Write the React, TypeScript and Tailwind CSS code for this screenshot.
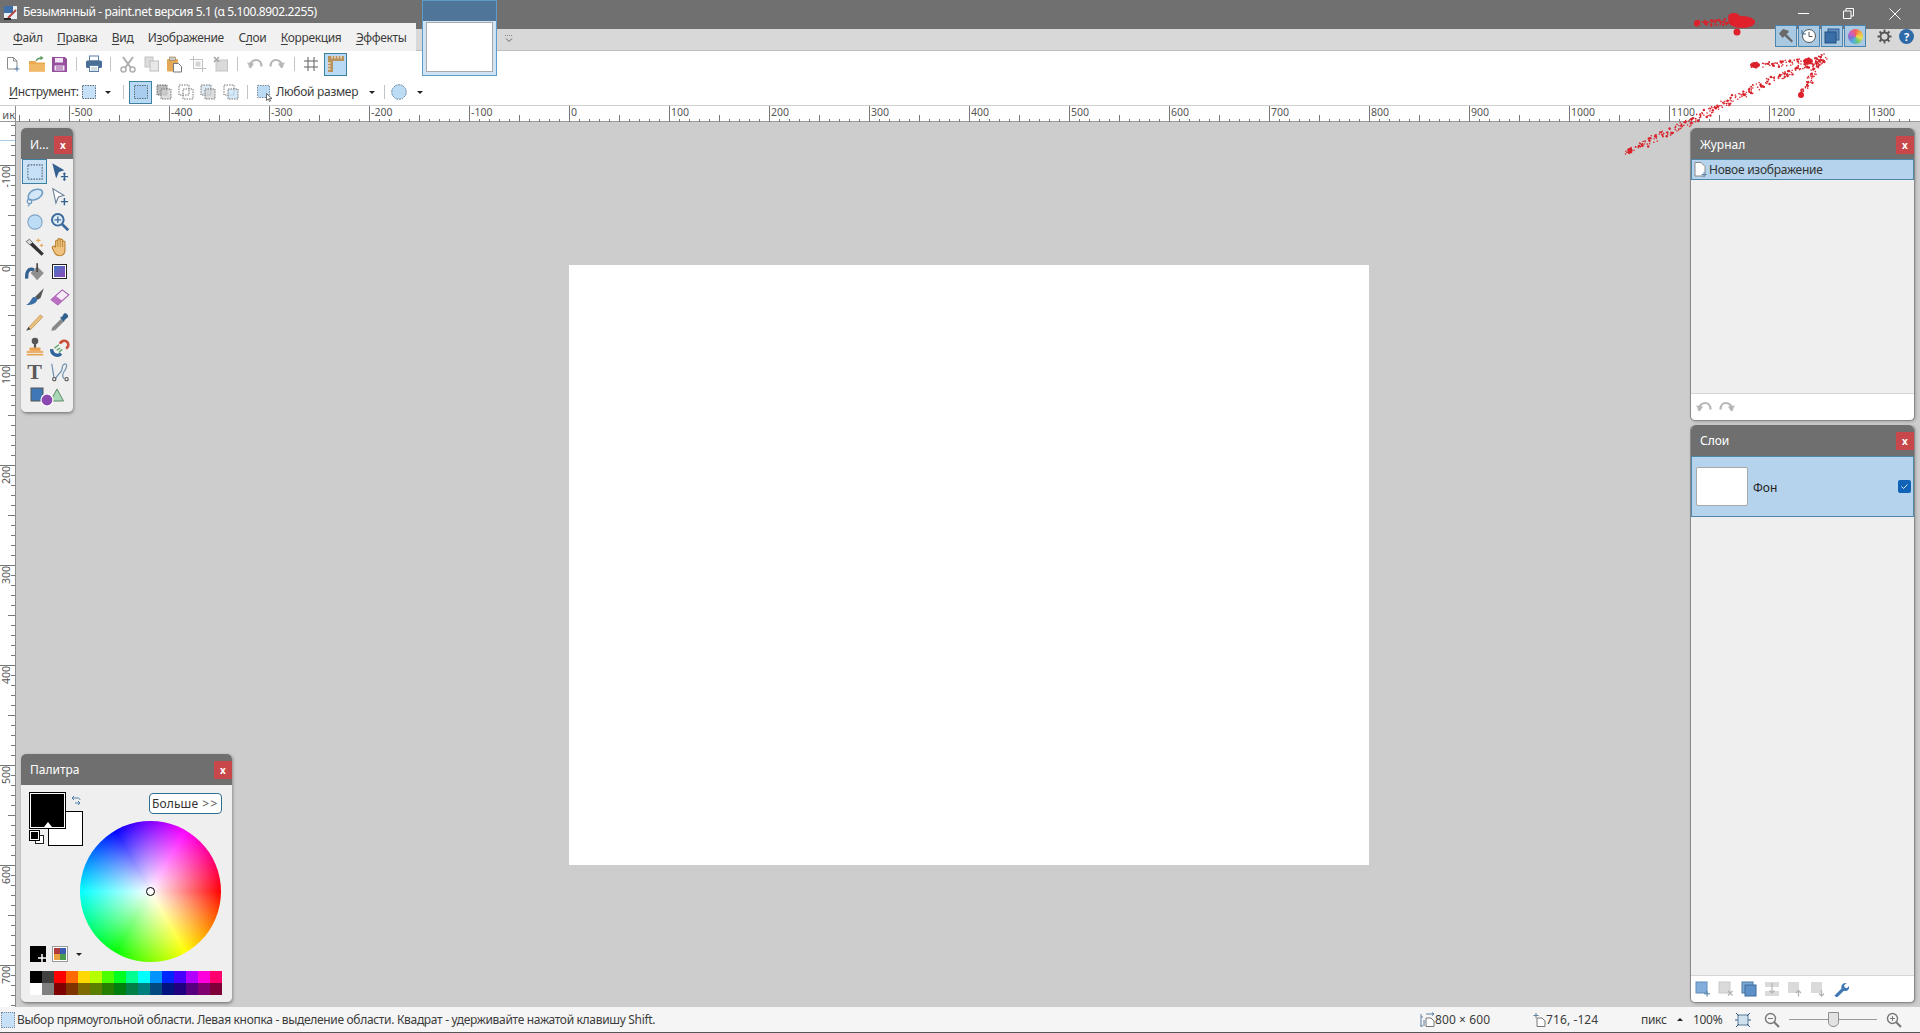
import type { ReactNode } from 'react'

function Ico({ w = 20, h = 20, children }: { w?: number; h?: number; children: ReactNode }) {
  return (
    <svg width={w} height={h} viewBox={`0 0 ${w} ${h}`} fill="none" className="shrink-0">
      {children}
    </svg>
  )
}

const menus: [string, string, string][] = [
  ['', 'Ф', 'айл'],
  ['', 'П', 'равка'],
  ['', 'В', 'ид'],
  ['И', 'з', 'ображение'],
  ['С', 'л', 'ои'],
  ['', 'К', 'оррекция'],
  ['', 'Э', 'ффекты'],
]

const paletteTop = ['#000000', '#404040', '#ff0000', '#ff6a00', '#ffd800', '#b6ff00', '#4cff00', '#00ff21', '#00ff90', '#00ffff', '#0094ff', '#0026ff', '#4800ff', '#b200ff', '#ff00dc', '#ff006e']
const paletteBottom = ['#ffffff', '#808080', '#7f0000', '#7f3300', '#7f6a00', '#5b7f00', '#267f00', '#007f0e', '#007f46', '#007f7f', '#004a7f', '#00137f', '#21007f', '#57007f', '#7f006e', '#7f0037']

function Caret() {
  return <div className="h-0 w-0 border-x-[3px] border-t-[3px] border-x-transparent border-t-[#222]" />
}

function Sep() {
  return (
    <div className="flex w-[11px] justify-center">
      <div className="h-[14px] w-px bg-[#c4c4c4]" />
    </div>
  )
}

function Btn({ children, active }: { children: ReactNode; active?: boolean }) {
  return (
    <div className={active ? 'flex h-[23px] w-[23px] items-center justify-center border border-[#3f7f9f] bg-[#b9daf5]' : 'flex h-[23px] w-[23px] items-center justify-center'}>
      {children}
    </div>
  )
}

/* ---- main toolbar icons ---- */
const NewIcon = () => (
  <Ico w={16} h={16}>
    <path d="M2.5 1.5h6l3.5 3.5v8h-9.500z" fill="#fff" stroke="#8a8a8a" />
    <path d="M8.500 1.500v3.500h3.500" stroke="#8a8a8a" />
    <path d="M12 10.500v5M9.500 13h5" stroke="#5a87b5" />
  </Ico>
)
const OpenIcon = () => (
  <Ico w={18} h={18}>
    <path d="M1 6h6l1.500 1.500h8.500v9h-16z" fill="#e8a84f" />
    <path d="M1 9h16v7.500h-16z" fill="#f0b765" />
    <path d="M8 6c1-2 3-3 6-3M12.500 1.500l2 1.500-2 1.500" stroke="#5c9a62" strokeWidth="1.300" />
  </Ico>
)
const SaveIcon = () => (
  <Ico w={17} h={17}>
    <path d="M1 1h13l2 2v13h-15z" fill="#96509f" />
    <rect x="4" y="2" width="8" height="4.500" fill="#f2e7f4" />
    <rect x="3.500" y="9.500" width="10" height="5" fill="#f2e7f4" />
    <path d="M5 11h7M5 13h7" stroke="#96509f" />
  </Ico>
)
const PrintIcon = () => (
  <Ico w={18} h={18}>
    <rect x="4.500" y="1" width="9" height="5" fill="#fff" stroke="#5a7fa6" />
    <rect x="1" y="5.500" width="16" height="7.500" rx="1.500" fill="#4a6f96" />
    <rect x="4.500" y="10.500" width="9" height="6" fill="#fff" stroke="#5a7fa6" />
    <path d="M6 13h6M6 15h6" stroke="#a9b9c9" />
  </Ico>
)
const CutIcon = () => (
  <Ico w={16} h={17}>
    <path d="M3 1l8 11M13 1l-8 11" stroke="#aeaeae" strokeWidth="2" />
    <circle cx="3.500" cy="13.500" r="2.500" stroke="#aeaeae" strokeWidth="1.500" />
    <circle cx="12.500" cy="13.500" r="2.500" stroke="#aeaeae" strokeWidth="1.500" />
  </Ico>
)
const CopyIcon = () => (
  <Ico w={16} h={16}>
    <rect x="1" y="1" width="8" height="10" fill="#dcdcdc" stroke="#c4c4c4" />
    <rect x="6" y="5" width="8.500" height="10" fill="#e8e8e8" stroke="#bdbdbd" />
  </Ico>
)
const PasteIcon = () => (
  <Ico w={17} h={17}>
    <rect x="1" y="3" width="11" height="12.500" rx="1" fill="#e3a957" />
    <rect x="3.500" y="1" width="6" height="3.500" fill="#c9c9c9" stroke="#9a7a4a" strokeWidth=".6" />
    <path d="M7.500 7.500h5l3 3v5.500h-8z" fill="#fff" stroke="#777" />
  </Ico>
)
const CropIcon = () => (
  <Ico w={16} h={16}>
    <path d="M3.500 0v12.500h12.500M0 3.500h12.500v12.500" stroke="#c0c0c0" />
    <rect x="5.500" y="5.500" width="5" height="5" fill="#d4d4d4" />
  </Ico>
)
const DeselectIcon = () => (
  <Ico w={16} h={16}>
    <rect x="3" y="4" width="11.500" height="11" fill="#dadada" stroke="#c4c4c4" />
    <path d="M1 1l5 5M6 1l-5 5" stroke="#a6a6a6" strokeWidth="1.600" />
  </Ico>
)
const UndoIcon = ({ color = '#b6b6b6' }: { color?: string }) => (
  <Ico w={17} h={14}>
    <path d="M4 10.500a6.200 6.200 0 0 1 6-7.500c3.500 0 5.500 3 5.500 6.500" stroke={color} strokeWidth="2.200" />
    <path d="M1 5.500l3.800 6 3.200-5z" fill={color} />
  </Ico>
)
const RedoIcon = ({ color = '#b6b6b6' }: { color?: string }) => (
  <svg width="17" height="14" viewBox="0 0 17 14" fill="none" className="shrink-0 -scale-x-100">
    <path d="M4 10.500a6.200 6.200 0 0 1 6-7.500c3.500 0 5.500 3 5.500 6.500" stroke={color} strokeWidth="2.200" />
    <path d="M1 5.500l3.800 6 3.200-5z" fill={color} />
  </svg>
)
const GridIcon = () => (
  <Ico w={16} h={16}>
    <path d="M5 1v14M11 1v14M1 5h14M1 11h14" stroke="#5f5f5f" />
  </Ico>
)
const RulerIcon = () => (
  <Ico w={18} h={18}>
    <path d="M1 1h16v5h-11v11h-5z" fill="#b8935c" />
    <path d="M5 1v2.500M8 1v2.500M11 1v2.500M14 1v2.500M1 8h2.500M1 11h2.500M1 14h2.500" stroke="#fff" />
  </Ico>
)

const SelectRect = ({ dark }: { dark?: boolean }) => (
  <Ico w={16} h={16}>
    <rect x="1.500" y="1.500" width="13" height="13" fill={dark ? '#a8cdee' : '#c5e0f7'} stroke="#596a7a" strokeDasharray="1.500 1" />
  </Ico>
)
const ComboRect = ({ mode }: { mode: number }) => (
  <Ico w={16} h={16}>
    {mode === 1 && <rect x="1" y="1" width="10" height="10" fill="#bcbcbc" stroke="#666" strokeDasharray="1.500 1" />}
    {mode !== 1 && <rect x="1" y="1" width="10" height="10" fill={mode === 3 ? '#dbe9f5' : 'none'} stroke="#777" strokeDasharray="1.500 1" />}
    <rect x="5" y="5" width="10" height="10" fill={mode === 2 ? 'none' : mode === 4 ? '#c5e0f7' : '#d0d0d0'} fillOpacity=".7" stroke="#777" strokeDasharray="1.500 1" />
  </Ico>
)

/* ---- tools window icons ---- */
const toolIcons: ReactNode[] = [
  <SelectRect key="rect" />,
  <Ico key="move" w={18} h={18}>
    <path d="M2 1l11 6.500-5 1.500-2.500 6z" fill="#33618f" />
    <path d="M13 10v6.500M9.800 13.200h6.500" stroke="#33618f" strokeWidth="1.300" />
    <path d="M12 11l1-1 1 1M12 15.500l1 1 1-1" stroke="#33618f" />
  </Ico>,
  <Ico key="lasso" w={18} h={18}>
    <path d="M4 11.500c-3-3 .5-9 7-9.500 5-.3 6 3 3.500 6-2.500 3-7 4.500-10.500 3.500z" fill="#d3e7f8" stroke="#6f9dc4" strokeWidth="1.400" />
    <circle cx="4" cy="13" r="2" stroke="#6f9dc4" strokeWidth="1.200" />
    <path d="M4 15c0 1-.5 2-1.500 2.500" stroke="#6f9dc4" />
  </Ico>,
  <Ico key="movesel" w={18} h={18}>
    <path d="M2.500 1.500l10 6-5 1.500-2.200 5.500z" fill="#fff" stroke="#6d8299" />
    <path d="M13 10v6.500M9.800 13.200h6.500" stroke="#33618f" strokeWidth="1.300" />
  </Ico>,
  <Ico key="ellipse" w={16} h={16}>
    <circle cx="8" cy="8" r="6.500" fill="#bddcf5" stroke="#7fa5c6" />
  </Ico>,
  <Ico key="zoom" w={18} h={18}>
    <circle cx="7" cy="7" r="5.300" fill="#e4eff8" stroke="#3d6a9c" strokeWidth="1.800" />
    <path d="M7 4v6M4 7h6" stroke="#3d6a9c" strokeWidth="1.200" />
    <path d="M11 11l5.500 5.500" stroke="#3d6a9c" strokeWidth="2.400" />
  </Ico>,
  <Ico key="wand" w={18} h={18}>
    <path d="M1 4l3-2 13 13-2 2z" fill="#333" />
    <path d="M1 4l3-2 3 3-3 2z" fill="#ddd" stroke="#555" strokeWidth=".6" />
    <path d="M12 1v4M10 3h4M15 6v3M13.500 7.500h3" stroke="#e6ad63" />
  </Ico>,
  <Ico key="hand" w={16} h={18}>
    <path d="M4 9V4c0-1.500 2-1.500 2 0V2.500c0-1.500 2.200-1.500 2.200 0V3c0-1.500 2.200-1.500 2.200 0v1.500c0-1.300 2.100-1.300 2.100 0V11c0 4-2 6-5 6-2.500 0-3.500-1-4.500-3l-2-4c-.5-1.500 1.500-2.500 2.500-1z" fill="#efc37f" stroke="#b98332" />
    <path d="M6 4v5M8.200 3v6M10.400 4v5" stroke="#b98332" strokeWidth=".8" />
  </Ico>,
  <Ico key="fill" w={18} h={18}>
    <path d="M5 10l6-6 6 6-6 6.500z" fill="#8f8f8f" />
    <path d="M11 1v8" stroke="#444" strokeWidth="1.500" />
    <path d="M8 7C3 5 1 9 1.500 15" stroke="#33618f" strokeWidth="3" />
  </Ico>,
  <div key="gradient" className="h-[15px] w-[15px] border border-[#222] bg-white p-[1px]">
    <div className="h-full w-full bg-gradient-to-br from-[#3574c4] to-[#8a48b8]" />
  </div>,
  <Ico key="brush" w={18} h={18}>
    <path d="M9 9l8-8-3 9-2.500 1.500z" fill="#555" />
    <path d="M1 16c3 .5 5.500 0 8-1.500 2-1.200 2.500-3 1.500-4.500-1.500-1.500-3.500-1-4.500.5-1.200 2-2.500 4.500-5 5.500z" fill="#3b6ea5" />
  </Ico>,
  <Ico key="eraser" w={18} h={16}>
    <path d="M1 10.500l10-9 6 4.500-10 9z" fill="#f6eaf6" stroke="#a55bb0" />
    <path d="M1 10.500l4-3.700 6 4.500-4 3.700z" fill="#bb6fc2" />
  </Ico>,
  <Ico key="pencil" w={18} h={18}>
    <path d="M3 14L14 2.500l2 2L5 16z" fill="#eac07f" stroke="#b88a45" strokeWidth=".6" />
    <path d="M1 17l2-3.500 2 2z" fill="#444" />
  </Ico>,
  <Ico key="dropper" w={18} h={18}>
    <path d="M1 17l1-3L10 6l2.500 2.500-8 8z" fill="#888" />
    <path d="M9 5l2-1 1.500-2.500c2-1.500 5 1.500 3.500 3.500L13.500 7l-1 2z" fill="#33618f" />
  </Ico>,
  <Ico key="stamp" w={18} h={18}>
    <circle cx="9" cy="3.500" r="3" fill="#555" />
    <path d="M8 6h2v4h-2z" fill="#555" />
    <path d="M4 9.500h10v3h-10z" fill="#e8a04d" />
    <path d="M1.500 12.500h15v2h-15z" fill="#eab06c" />
    <path d="M1.500 16h15" stroke="#e8a04d" strokeWidth="1.400" />
  </Ico>,
  <Ico key="recolor" w={18} h={18}>
    <path d="M9 6a4 4 0 0 1 7-1 4 4 0 0 1-1.500 5.500" stroke="#c9513d" strokeWidth="2.400" />
    <path d="M1.500 11a5 5 0 0 0 8.500 4" stroke="#2f639b" strokeWidth="3" />
    <path d="M4 10l4-3M6 12l3-2M8 14l3-3" stroke="#5ca56a" strokeWidth="1.200" />
  </Ico>,
  <span key="text" className="font-['Liberation_Serif',serif] text-[22px] leading-none font-bold text-[#5a5a5a]">T</span>,
  <Ico key="line" w={18} h={18}>
    <path d="M1.500 1.500l2 12.500" stroke="#6d8fae" strokeWidth="1.100" />
    <path d="M5 15c1-3 6-6 6-9.500 0-3 2-4.500 3.500-3.500 1.500 1-.5 5-2 7-1.500 2-1.500 5 .5 6" stroke="#6d8fae" strokeWidth="1.100" />
    <circle cx="3.800" cy="15.500" r="1.500" stroke="#555" />
    <circle cx="15" cy="15.500" r="1.500" stroke="#555" />
  </Ico>,
]

const ShapesIcon = () => (
  <Ico w={34} h={20}>
    <rect x="1" y="1" width="12" height="13" fill="#3f78b5" stroke="#555" />
    <path d="M27 2l6.500 12h-13z" fill="#a9d6b4" stroke="#5c8a68" />
    <circle cx="17" cy="13" r="6" fill="#8a48b0" stroke="#fff" strokeWidth="1.200" />
  </Ico>
)

/* ---- layers footer ---- */
const layerIcons: ReactNode[] = [
  <Ico key="add" w={16} h={16}>
    <rect x="1" y="1" width="11" height="11" fill="#82aedb" stroke="#5e8bb8" />
    <path d="M12 10v5.500M9 12.800h6" stroke="#4f7ea9" />
  </Ico>,
  <Ico key="del" w={16} h={16}>
    <rect x="1" y="1" width="11" height="11" fill="#dadada" stroke="#c8c8c8" />
    <path d="M10 10l4.500 4.500M14.500 10l-4.500 4.500" stroke="#b3b3b3" strokeWidth="1.400" />
  </Ico>,
  <Ico key="dup" w={16} h={16}>
    <rect x="1" y="1" width="11" height="11" fill="#7ba9d6" stroke="#4a78a6" />
    <rect x="4" y="4" width="11" height="11" fill="#5f91c9" stroke="#3e6c9e" />
  </Ico>,
  <Ico key="merge" w={16} h={16}>
    <rect x="1" y="1" width="14" height="5" fill="#dadada" />
    <rect x="1" y="10" width="14" height="5" fill="#dadada" />
    <path d="M8 2v10M5.500 9.500l2.500 2.500 2.500-2.500" stroke="#b5b5b5" strokeWidth="1.200" />
  </Ico>,
  <Ico key="up" w={16} h={16}>
    <rect x="1" y="1" width="11" height="11" fill="#dadada" />
    <path d="M11.500 15.500v-6M9 12l2.500-2.500 2.500 2.500" stroke="#b5b5b5" strokeWidth="1.300" />
  </Ico>,
  <Ico key="down" w={16} h={16}>
    <rect x="1" y="1" width="11" height="11" fill="#dadada" />
    <path d="M11.500 9v6M9 12.500l2.500 2.500 2.500-2.500" stroke="#b5b5b5" strokeWidth="1.300" />
  </Ico>,
  <Ico key="props" w={16} h={16}>
    <path d="M1.500 14.500l7-7c-1-3 1.500-6 5-5.500l-2.500 2.500.8 2 2 .8 2.500-2.500c.5 3.500-2.500 6-5.500 5l-7 7z" fill="#3f78b5" />
  </Ico>,
]

function HorizontalRuler() {
  const ticks: number[] = []
  for (let v = -560; v <= 1340; v += 10) ticks.push(v)
  return (
    <svg width="1904" height="17" className="block">
      {ticks.map((v) => {
        const x = v + 553
        const h = v % 100 === 0 ? 17 : v % 50 === 0 ? 8 : 4
        return <line key={v} x1={x + 0.5} x2={x + 0.5} y1={17 - h} y2={17} stroke="#777" />
      })}
      {ticks
        .filter((v) => v % 100 === 0)
        .map((v) => (
          <text key={v} x={v + 555} y={10} fontSize="10.500" fill="#555" fontFamily="Noto Sans, sans-serif">
            {v}
          </text>
        ))}
    </svg>
  )
}

function VerticalRuler() {
  const ticks: number[] = []
  for (let v = -140; v <= 740; v += 10) ticks.push(v)
  return (
    <svg width="16" height="885" className="block">
      <line x1="0" x2="16" y1="18.500" y2="18.500" stroke="#a9cbe3" />
      {ticks.map((v) => {
        const y = v + 143
        const w = v % 100 === 0 ? 16 : v % 50 === 0 ? 8 : 5
        return <line key={v} x1={16 - w} x2={16} y1={y + 0.5} y2={y + 0.5} stroke="#777" />
      })}
      {ticks
        .filter((v) => v % 100 === 0)
        .map((v) => (
          <text key={v} transform={`translate(10 ${v + 144}) rotate(-90)`} textAnchor="end" fontSize="10.500" fill="#555" fontFamily="Noto Sans, sans-serif">
            {v}
          </text>
        ))}
      <line x1="15.500" x2="15.500" y1="0" y2="885" stroke="#8c8c8c" />
    </svg>
  )
}

function CloseBox({ lifted }: { lifted?: boolean }) {
  return (
    <div className={lifted ? 'mt-[1px] flex h-[18px] w-[18px] items-center justify-center bg-[#c8474b] text-[10px] leading-none font-bold text-white' : 'mt-[3px] flex h-[18px] w-[18px] items-center justify-center bg-[#c8474b] text-[10px] leading-none font-bold text-white'}>x</div>
  )
}

function PanelHead({ title, lifted }: { title: string; lifted?: boolean }) {
  return (
    <div className="flex h-[31px] items-center justify-between rounded-t-[5px] bg-[#6f6f6f] pl-[9px] text-[12px] text-white">
      <span className={lifted ? 'mt-0' : 'mt-[2px]'}>{title}</span>
      <CloseBox lifted={lifted} />
    </div>
  )
}

// красные точки рисуются вдоль ломаной с небольшим разбросом
function scatter(points: [number, number][], step: number, spread: number) {
  const dots: [number, number, number][] = []
  let seed = 7
  const rnd = () => {
    seed = (seed * 9301 + 49297) % 233280
    return seed / 233280
  }
  for (let i = 0; i < points.length - 1; i++) {
    const [x1, y1] = points[i]
    const [x2, y2] = points[i + 1]
    const len = Math.hypot(x2 - x1, y2 - y1)
    const n = Math.ceil(len / step)
    for (let j = 0; j <= n; j++) {
      const t = j / n
      dots.push([x1 + (x2 - x1) * t + (rnd() - 0.5) * spread, y1 + (y2 - y1) * t + (rnd() - 0.5) * spread, rnd() > 0.7 ? 1.2 : 0.8])
    }
  }
  return dots
}

const scribble = [
  ...scatter([[1627, 152], [1690, 122], [1762, 84], [1825, 58]], 0.8, 7),
  ...scatter([[1752, 65], [1780, 64], [1810, 61], [1823, 58]], 1, 6),
  ...scatter([[1801, 95], [1812, 76], [1823, 56]], 0.7, 6),
  ...scatter([[1696, 23], [1716, 23], [1732, 21]], 0.5, 6),
]

export default function App() {
  return (
    <div className="relative flex h-[1033px] w-[1920px] flex-col overflow-hidden bg-white font-['Noto_Sans',sans-serif] text-[12px] text-[#333]">
      {/* Заголовок окна */}
      <header className="flex h-[29px] shrink-0 items-center bg-[#707070] pb-[5px]">
        <div className="ml-[3px] mr-[5px]">
          <Ico w={15} h={15}>
            <rect x="1" y="1" width="13" height="13" fill="#e8eef5" />
            <path d="M1 1h9v7H1z" fill="#3f6fa8" />
            <path d="M5 13L13 5" stroke="#b3413f" strokeWidth="2" />
            <path d="M1 14h7" stroke="#222" strokeWidth="2" />
          </Ico>
        </div>
        <span className="text-[12px] tracking-[-0.39px] text-white">Безымянный - paint.net версия 5.1 (α 5.100.8902.2255)</span>
        <div className="ml-auto flex items-center gap-[34px] pr-[18px] pt-[3px]">
          <div className="h-px w-[11px] bg-white" />
          <Ico w={11} h={11}>
            <path d="M.5 3h7.500v7.500h-7.500zM3 3V.5h7.500V8H8" stroke="#fff" />
          </Ico>
          <Ico w={14} h={14}>
            <path d="M1.500 1.500l11 11M12.500 1.500l-11 11" stroke="#fff" />
          </Ico>
        </div>
      </header>

      {/* Меню */}
      <div className="flex h-[22px] shrink-0 border-b border-[#bdbdbd] bg-[#d8d8d8]">
        <nav className="relative -mt-[6px] flex h-[28px] w-[416px] items-center gap-[14.500px] bg-[#f1f1f1] pl-[13px] pt-[1px] text-[12px] tracking-[-0.35px] text-[#3c3c3c]">
          {menus.map(([a, u, b]) => (
            <span key={u + b}>
              {a}
              <span className="underline underline-offset-2">{u}</span>
              {b}
            </span>
          ))}
        </nav>
        <div className="relative -mt-[29px] ml-[6px] flex h-[76px] w-[75px] flex-col border border-[#5d9bc9] bg-[#cfe3f4]">
          <div className="h-[20px] bg-[#4f7598]" />
          <div className="mx-[3px] mt-[1px] h-[50px] border border-[#a9a9a9] bg-white" />
        </div>
        <div className="ml-[7px] mt-[5px]">
          <Ico w={10} h={10}>
            <path d="M1 1.500h8" stroke="#888" strokeDasharray="1 1" />
            <path d="M2 4.500l3 3 3-3" stroke="#666" />
          </Ico>
        </div>
        <div className="relative ml-auto -mt-[4px] flex h-[22px] items-center pr-[6px]">
          <div className="flex gap-[1px]">
            <div className="flex h-[22px] w-[22px] items-center justify-center border border-[#4a85b0] bg-[#a9c8e2]">
              <Ico w={16} h={16}>
                <path d="M1 5.500l4-4.500 5 1.500 1 1.500-2.500 2 6.500 7-1.500 1.500-7-6.500-2 2z" fill="#6a6a6a" />
              </Ico>
            </div>
            <div className="flex h-[22px] w-[22px] items-center justify-center border border-[#4a85b0] bg-[#a9c8e2]">
              <Ico w={16} h={16}>
                <circle cx="8" cy="8" r="6.500" fill="#fff" stroke="#555" />
                <path d="M8 4v4.500h3.500" stroke="#555" />
                <path d="M1 2v4h4" stroke="#3d6a9c" />
              </Ico>
            </div>
            <div className="flex h-[22px] w-[22px] items-center justify-center border border-[#4a85b0] bg-[#a9c8e2]">
              <Ico w={16} h={16}>
                <rect x="4" y="1" width="11" height="11" fill="#5c8cc0" stroke="#2f5f92" />
                <rect x="1" y="4" width="11" height="11" fill="#3a6ea8" stroke="#24507f" />
              </Ico>
            </div>
            <div className="flex h-[22px] w-[22px] items-center justify-center border border-[#4a85b0] bg-[#a9c8e2]">
              <div className="h-[15px] w-[15px] rounded-full bg-[conic-gradient(#f06060,#f0b040,#e8e050,#70c870,#50b0e0,#8070d0,#d060c0,#f06060)]" />
            </div>
          </div>
          <div className="ml-[9px] flex w-[18px] justify-center">
            <Ico w={15} h={15}>
              <circle cx="7.500" cy="7.500" r="4" stroke="#555" strokeWidth="1.800" />
              <path d="M7.500 .5v3M7.500 11.500v3M.5 7.500h3M11.500 7.500h3M2.500 2.500l2 2M10.500 10.500l2 2M12.500 2.500l-2 2M4.500 10.500l-2 2" stroke="#555" strokeWidth="1.800" />
            </Ico>
          </div>
          <div className="ml-[6px] flex h-[15px] w-[15px] items-center justify-center rounded-full bg-[#2f6aa8] text-[11px] leading-none font-bold text-white">?</div>
        </div>
      </div>

      {/* Панель инструментов */}
      <div className="flex h-[28px] shrink-0 items-center pb-[2px] pl-[1px]">
        <Btn><NewIcon /></Btn>
        <div className="w-px" />
        <Btn><OpenIcon /></Btn>
        <Btn><SaveIcon /></Btn>
        <Sep />
        <Btn><PrintIcon /></Btn>
        <Sep />
        <Btn><CutIcon /></Btn>
        <div className="w-px" />
        <Btn><CopyIcon /></Btn>
        <Btn><PasteIcon /></Btn>
        <Btn><CropIcon /></Btn>
        <Btn><DeselectIcon /></Btn>
        <Sep />
        <Btn><UndoIcon /></Btn>
        <Btn><RedoIcon /></Btn>
        <Sep />
        <div className="-ml-px"><Btn><GridIcon /></Btn></div>
        <div className="w-[2px]" />
        <Btn active><RulerIcon /></Btn>
      </div>

      {/* Настройки инструмента */}
      <div className="flex h-[26px] shrink-0 items-center pl-[9px] tracking-[-0.3px] text-[#3c3c3c]">
        <span className="w-[72px]"><span className="underline underline-offset-2">И</span>нструмент:</span>
        <SelectRect />
        <div className="ml-[8px]"><Caret /></div>
        <div className="ml-[7px]"><Sep /></div>
        <Btn active><SelectRect dark /></Btn>
        <Btn><ComboRect mode={1} /></Btn>
        <div className="-ml-px"><Btn><ComboRect mode={2} /></Btn></div>
        <div className="-ml-px"><Btn><ComboRect mode={3} /></Btn></div>
        <Btn><ComboRect mode={4} /></Btn>
        <Sep />
        <div className="relative ml-[4px] mr-[4px]">
          <Ico w={14} h={14}>
            <rect x=".5" y=".5" width="12" height="12" fill="#bcdcf5" stroke="#7b8b9a" strokeDasharray="1.500 1" />
          </Ico>
          <div className="absolute top-[8px] left-[9px]">
            <Ico w={7} h={9}>
              <path d="M.5.5v7l2-1.500 1 2.500 1-.5-1-2.500h2.500z" fill="#fff" stroke="#333" strokeWidth=".7" />
            </Ico>
          </div>
        </div>
        <span className="ml-[1px] w-[93px]">Любой размер</span>
        <Caret />
        <div className="ml-[4px]"><Sep /></div>
        <div className="ml-[1px]">
          <Ico w={16} h={16}>
            <path d="M4.500 1.500c2-1 5-1 7 0l3 3c1 2 1 5 0 7l-3 3c-2 1-5 1-7 0l-3-3c-1-2-1-5 0-7z" fill="#bcdcf5" stroke="#6f8ba3" strokeDasharray="2 .7" />
          </Ico>
        </div>
        <div className="ml-[10px]"><Caret /></div>
      </div>

      {/* Линейка */}
      <div className="flex h-[17px] shrink-0 border-y border-t-[#cfcfcf] border-b-[#9a9a9a]">
        <div className="w-[16px] overflow-hidden border-r border-[#8c8c8c] pt-[3px] text-right text-[11px] leading-none text-[#555]">ик</div>
        <HorizontalRuler />
      </div>

      {/* Рабочая область */}
      <main className="flex min-h-0 flex-1">
        <div className="w-[16px] shrink-0 bg-white">
          <VerticalRuler />
        </div>
        <div className="flex-1 bg-[#cdcdcd] pt-[143px] pl-[553px]">
          <div className="h-[600px] w-[800px] bg-white" />
        </div>
      </main>

      {/* Строка состояния */}
      <footer className="flex h-[26px] shrink-0 items-center border-b border-[#555] bg-[#f5f5f5] pl-[1px] tracking-[-0.32px] text-[#3c3c3c]">
        <div className="mr-[2px] h-[16px] w-[14px] border border-dotted border-[#7b8b9a] bg-[#c5e0f7]" />
        <span>Выбор прямоугольной области. Левая кнопка - выделение области. Квадрат - удерживайте нажатой клавишу Shift.</span>
        <div className="ml-auto flex items-center pr-[18px]">
          <Ico w={15} h={15}>
            <path d="M1 2v12M4 14v-6M1 5h2M0 14h3" stroke="#5b7ea0" />
            <path d="M6 6h5l3 3v5.500h-8z" fill="#fff" stroke="#777" />
            <path d="M6 2h8M12 .5l2 1.500-2 1.500" stroke="#5b7ea0" />
          </Ico>
          <span className="w-[98px] tracking-[0.1px]">800 × 600</span>
          <Ico w={13} h={15}>
            <path d="M3 1v5M.5 3.500h5" stroke="#5b7ea0" />
            <path d="M4 6h5l3 3v5.500h-8z" fill="#fff" stroke="#777" />
          </Ico>
          <span className="w-[95px] tracking-[0.1px]">716, -124</span>
          <span className="w-[36px]">пикс</span>
          <div className="w-[16px]">
            <div className="h-0 w-0 border-x-[3px] border-b-[3px] border-x-transparent border-b-[#222]" />
          </div>
          <span className="w-[42px]">100%</span>
          <div className="w-[29px]">
            <Ico w={16} h={16}>
              <rect x="3" y="3" width="10" height="10" fill="#cfe0ee" stroke="#5f7d96" />
              <path d="M1 1l3 3M15 1l-3 3M1 15l3-3M15 15l-3-3M0 8h3M13 8h3" stroke="#33618f" />
            </Ico>
          </div>
          <div className="w-[25px]">
            <Ico w={16} h={16}>
              <circle cx="6.500" cy="6.500" r="5" stroke="#777" strokeWidth="1.400" />
              <path d="M4 6.500h5" stroke="#777" />
              <path d="M10 10l5 5" stroke="#777" strokeWidth="2" />
            </Ico>
          </div>
          <div className="relative flex h-[16px] w-[88px] items-center">
            <div className="h-px w-full bg-[#999]" />
            <div className="absolute left-[39px] h-[15px] w-[11px] rounded-b-[5px] border border-[#8f8f8f] bg-[#e2e2e2]" />
          </div>
          <div className="ml-[9px]">
            <Ico w={16} h={16}>
              <circle cx="6.500" cy="6.500" r="5" stroke="#777" strokeWidth="1.400" />
              <path d="M4 6.500h5M6.500 4v5" stroke="#777" />
              <path d="M10 10l5 5" stroke="#777" strokeWidth="2" />
            </Ico>
          </div>
        </div>
      </footer>

      {/* Окно инструментов */}
      <section className="absolute top-[128px] left-[21px] w-[52px] rounded-[5px] border-b border-[#8a8a8a] bg-[#efefef] shadow-[1px_1px_3px_rgba(0,0,0,0.3)]">
        <div className="flex h-[31px] items-center justify-between rounded-t-[5px] bg-[#6f6f6f] pr-[1px] pl-[9px] text-white">
          <span className="mt-[2px]">И...</span>
          <CloseBox />
        </div>
        <div className="grid grid-cols-[25px_25px] pb-[3px] pl-[1px]">
          {toolIcons.map((icon, i) => (
            <div key={i} className={i === 0 ? 'flex h-[25px] items-center justify-center border border-[#3f7f9f] bg-[#c9e2f6] [&>svg]:scale-110' : 'flex h-[25px] items-center justify-center [&>svg]:scale-110'}>
              {icon}
            </div>
          ))}
          <div className="col-span-2 flex h-[25px] items-center justify-center"><ShapesIcon /></div>
        </div>
      </section>

      {/* Палитра */}
      <section className="absolute top-[754px] left-[21px] h-[249px] w-[211px] rounded-[5px] border-b border-[#8a8a8a] bg-[#efefef] shadow-[1px_1px_3px_rgba(0,0,0,0.3)]">
        <PanelHead title="Палитра" lifted />
        <div className="relative h-[218px]">
          <div className="absolute top-[26px] left-[27px] h-[35px] w-[35px] border border-black bg-white" />
          <div className="absolute top-[8px] left-[9px] flex h-[35px] w-[35px] items-end justify-center border border-white bg-black outline outline-black">
            <div className="h-0 w-0 border-x-[4px] border-b-[5px] border-x-transparent border-b-white" />
          </div>
          <div className="absolute top-[10px] left-[50px]">
            <Ico w={10} h={11}>
              <path d="M2 3h5c1 0 2 1 2 2M1 3l2-2M1 3l2 2M8 8H4M9 8L7 6M9 8l-2 2" stroke="#4f7ea9" />
            </Ico>
          </div>
          <div className="absolute top-[46px] left-[9px] h-[14px] w-[14px]">
            <div className="absolute top-[4px] left-[5px] h-[9px] w-[9px] border border-[#222] bg-white" />
            <div className="absolute top-0 left-0 h-[9px] w-[9px] border border-white bg-black outline outline-black" />
          </div>
          <div className="absolute top-[8px] left-[128px] flex h-[21px] w-[73px] items-center justify-center gap-[4px] rounded-[4px] border border-[#2f6f8f] bg-white text-[12px] tracking-[0.1px]">
            <span>Больше</span>
            <span className="tracking-[1.5px] text-[#555]">&gt;&gt;</span>
          </div>

          <div className="absolute top-[36px] left-[59px] h-[141px] w-[141px] rounded-full bg-[radial-gradient(closest-side,#ffffff,#ffffff00),conic-gradient(from_90deg,#ff0000,#ffff00,#00ff00,#00ffff,#0000ff,#ff00ff,#ff0000)]" />
          <div className="absolute top-[102px] left-[125px] h-[9px] w-[9px] rounded-full border border-black" />

          <div className="absolute top-[161px] left-[9px] flex h-[16px] w-[16px] items-end justify-end bg-black">
            <Ico w={8} h={8}>
              <path d="M4 0v8M0 4h8" stroke="#fff" strokeWidth="1.500" />
            </Ico>
          </div>
          <div className="absolute top-[161px] left-[31px] flex h-[16px] w-[16px] items-center justify-center border border-[#999] bg-white">
            <div className="grid h-[12px] w-[12px] grid-cols-2">
              <div className="bg-[#b33a3a]" />
              <div className="bg-[#3a5ab3]" />
              <div className="bg-[#e8a040]" />
              <div className="bg-[#4a9a50]" />
            </div>
          </div>
          <div className="absolute top-[168px] left-[55px]"><Caret /></div>

          <div className="absolute top-[186px] left-[9px] grid w-[192px] grid-cols-[repeat(16,12px)]">
            {paletteTop.concat(paletteBottom).map((c, i) => (
              <svg key={i} width="12" height="12" className="block"><rect width="12" height="12" fill={c} /></svg>
            ))}
          </div>
        </div>
      </section>

      {/* Журнал */}
      <section className="absolute top-[128px] left-[1690px] flex h-[293px] w-[225px] flex-col rounded-[5px] border-x border-b border-[#8a8a8a] bg-[#efefef] shadow-[1px_1px_3px_rgba(0,0,0,0.2)]">
        <PanelHead title="Журнал" />
        <div className="flex h-[21px] items-center gap-[2px] border border-[#4c87a8] bg-[#b5d3ec] pl-[2px] text-[#333]">
          <Ico w={13} h={15}>
            <path d="M1 .5h6l4 4v9.500h-10z" fill="#fff" stroke="#888" />
            <path d="M10 10v5M7.500 12.500h5" stroke="#5a87b5" />
          </Ico>
          <span className="tracking-[-0.25px]">Новое изображение</span>
        </div>
        <div className="flex-1" />
        <div className="flex h-[27px] items-center gap-[7px] rounded-b-[5px] border-t border-[#d6d6d6] bg-white pl-[4px]">
          <UndoIcon />
          <RedoIcon />
        </div>
      </section>

      {/* Слои */}
      <section className="absolute top-[425px] left-[1690px] flex h-[578px] w-[225px] flex-col rounded-[5px] border-x border-b border-[#8a8a8a] bg-[#efefef] shadow-[1px_1px_3px_rgba(0,0,0,0.2)]">
        <PanelHead title="Слои" lifted />
        <div className="flex h-[61px] items-center border border-[#4c87a8] bg-[#b5d3ec] pl-[4px]">
          <div className="h-[39px] w-[52px] rounded-[2px] border border-[#a9a9a9] bg-white" />
          <span className="ml-[5px] mt-[2px] text-[#222]">Фон</span>
          <div className="ml-auto mr-[2px] flex h-[13px] w-[13px] items-center justify-center rounded-[2px] bg-[#1163b8]">
            <Ico w={9} h={9}>
              <path d="M1.500 4.500l2 2 4-4" stroke="#d9ecff" />
            </Ico>
          </div>
        </div>
        <div className="flex-1" />
        <div className="flex h-[27px] items-center gap-[7px] rounded-b-[5px] border-t border-[#d6d6d6] bg-white pl-[4px]">
          {layerIcons.map((icon) => icon)}
        </div>
      </section>

      {/* Красные пометки поверх снимка */}
      <svg width="1920" height="1033" className="pointer-events-none absolute top-0 left-0">
        <g fill="#e0202a">
          <ellipse cx="1742" cy="22" rx="13" ry="6" />
          <ellipse cx="1734" cy="17" rx="6" ry="4" />
          <circle cx="1737" cy="32" r="3.500" />
          <circle cx="1697" cy="23" r="3" />
          <circle cx="1630" cy="151" r="2.500" />
          <circle cx="1801" cy="95" r="3" />
          <ellipse cx="1755" cy="65" rx="5" ry="3" />
          <ellipse cx="1808" cy="61" rx="5" ry="3" />
        </g>
        <g fill="#d8232c">
          {scribble.map(([x, y, r], i) => (
            <circle key={i} cx={x} cy={y} r={r} />
          ))}
        </g>
      </svg>
    </div>
  )
}
